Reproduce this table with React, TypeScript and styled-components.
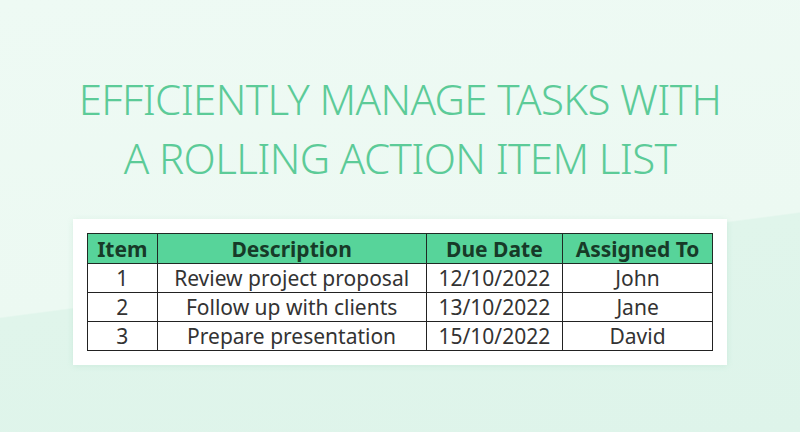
import styled, { createGlobalStyle } from "styled-components";

const GlobalStyle = createGlobalStyle`
  html, body {
    margin: 0;
    padding: 0;
  }
  body {
    font-family: "Noto Sans", "Liberation Sans", sans-serif;
  }
`;

const Page = styled.div`
  width: 800px;
  height: 432px;
  overflow: hidden;
  box-sizing: border-box;
  padding-top: 69px;
  display: flex;
  flex-direction: column;
  align-items: center;
  background: linear-gradient(
    172.5deg,
    #eefaf4 0%,
    #ecf9f2 59%,
    #e0f5eb 59.3%,
    #def4ea 100%
  );
`;

const Title = styled.h1`
  margin: 0;
  font-family: "Noto Sans", sans-serif;
  font-weight: 300;
  font-size: 42px;
  line-height: 59px;
  letter-spacing: -0.6px;
  color: #5ccb98;
  text-align: center;
`;

const Card = styled.div`
  margin-top: 32px;
  width: 654px;
  box-sizing: border-box;
  padding: 14px;
  background: #fff;
  box-shadow: 0 1px 6px rgba(120, 200, 160, 0.18);
`;

const Table = styled.table`
  width: 100%;
  border-collapse: collapse;
  font-family: "Noto Sans", sans-serif;
  font-size: 21px;
  color: #333;
`;

const HeadCell = styled.th<{ w: number }>`
  width: ${(p) => p.w}px;
  height: 29px;
  padding: 0;
  background: #57d49a;
  color: #173a28;
  font-weight: 700;
  border: 1.5px solid #1f2a24;
  text-align: center;
  line-height: 28px;
`;

const Cell = styled.td`
  height: 28px;
  padding: 0;
  border: 1.5px solid #222;
  text-align: center;
  line-height: 27px;
`;

interface IRow {
  item: number;
  description: string;
  due: string;
  assigned: string;
}

const columns = [
  { label: "Item", w: 69 },
  { label: "Description", w: 271 },
  { label: "Due Date", w: 136 },
  { label: "Assigned To", w: 150 },
];

const rows: Array<IRow> = [
  { item: 1, description: "Review project proposal", due: "12/10/2022", assigned: "John" },
  { item: 2, description: "Follow up with clients", due: "13/10/2022", assigned: "Jane" },
  { item: 3, description: "Prepare presentation", due: "15/10/2022", assigned: "David" },
];

function App() {
  return (
    <>
      <GlobalStyle />
      <Page>
        <Title>
          EFFICIENTLY MANAGE TASKS WITH
          <br />
          A ROLLING ACTION ITEM LIST
        </Title>
        <Card>
          <Table>
            <thead>
              <tr>
                {columns.map((c) => (
                  <HeadCell key={c.label} w={c.w}>
                    {c.label}
                  </HeadCell>
                ))}
              </tr>
            </thead>
            <tbody>
              {rows.map((r) => (
                <tr key={r.item}>
                  <Cell>{r.item}</Cell>
                  <Cell>{r.description}</Cell>
                  <Cell>{r.due}</Cell>
                  <Cell>{r.assigned}</Cell>
                </tr>
              ))}
            </tbody>
          </Table>
        </Card>
      </Page>
    </>
  );
}

export default App;
